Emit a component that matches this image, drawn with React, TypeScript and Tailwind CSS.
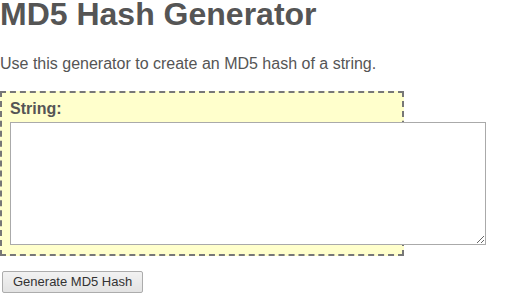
export default function App() {
  return (
    <div className="font-['Liberation_Sans',Arial,sans-serif] text-[#555] bg-white min-h-screen">
      <h1 className="m-0 text-[32px] leading-[28px] font-bold">MD5 Hash Generator</h1>
      <p className="mt-[27px] text-[16px] leading-[18px]">
        Use this generator to create an MD5 hash of a string.
      </p>
      <div className="mt-[18px] w-[404px] border-2 border-dashed border-[#777] bg-[#ffffcc] px-[8px] pt-[7px] pb-[9px]">
        <label className="block text-[16px] leading-[18px] font-bold mb-[4px]">String:</label>
        <textarea className="block w-[476px] h-[123px] border border-[#aaa] bg-white outline-none" />
      </div>
      <button className="mt-[15px] ml-[2px] h-[22px] px-[10px] border border-[#acacac] rounded-[2px] bg-gradient-to-b from-[#f2f2f2] to-[#e3e3e3] text-[13px] leading-[20px] text-[#333]">
        Generate MD5 Hash
      </button>
    </div>
  );
}
